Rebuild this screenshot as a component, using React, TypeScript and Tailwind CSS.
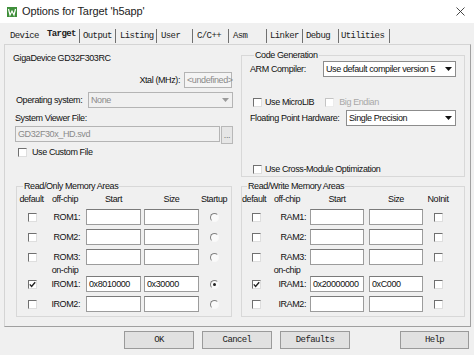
const sans = "font-['Liberation_Sans',Arial,sans-serif] text-[9px] tracking-[-0.4px] leading-[11px]"
const mono = "font-['Liberation_Mono','Courier_New',monospace] text-[9px] tracking-[-0.6px]"

function Check({ checked = false, disabled = false }: { checked?: boolean; disabled?: boolean }) {
  return (
    <span
      className={`flex h-[9px] w-[9px] shrink-0 items-center justify-center border bg-white ${
        disabled
          ? 'border-t-[#c4c4c4] border-l-[#c4c4c4] border-r-[#ececec] border-b-[#ececec]'
          : 'border-t-[#707070] border-l-[#707070] border-r-[#dedede] border-b-[#dedede]'
      }`}
    >
      {checked && (
        <svg width="7" height="7" viewBox="0 0 7 7">
          <path d="M0.8 3.4 L2.6 5.4 L6.2 1.2" fill="none" stroke="#222" strokeWidth="1.4" />
        </svg>
      )}
    </span>
  )
}

function Radio({ checked = false }: { checked?: boolean }) {
  return (
    <span className="flex h-[9px] w-[9px] items-center justify-center rounded-full border border-t-[#808080] border-l-[#808080] border-r-[#f8f8f8] border-b-[#f8f8f8] bg-[#fafafa]">
      {checked && <span className="h-[3px] w-[3px] rounded-full bg-[#222]" />}
    </span>
  )
}

function Arrow({ dim = false }: { dim?: boolean }) {
  return (
    <svg width="7" height="4" viewBox="0 0 7 4">
      <path d="M0 0H7L3.5 4Z" fill={dim ? '#9a9a9a' : '#111'} />
    </svg>
  )
}

function Input({ value = '', className = '' }: { value?: string; className?: string }) {
  return (
    <div
      className={`flex h-[16px] shrink-0 items-center border border-[#9c9c9c] border-t-[#7a7a7a] bg-white pl-[2px] text-[#111] ${className}`}
    >
      {value}
    </div>
  )
}

type MemRow = { name: string; checked?: boolean; start?: string; size?: string; onChip?: boolean }

const romRows: MemRow[] = [
  { name: 'ROM1:' },
  { name: 'ROM2:' },
  { name: 'ROM3:' },
  { name: 'IROM1:', checked: true, start: '0x8010000', size: '0x30000', onChip: true },
  { name: 'IROM2:' },
]

const ramRows: MemRow[] = [
  { name: 'RAM1:' },
  { name: 'RAM2:' },
  { name: 'RAM3:' },
  { name: 'IRAM1:', checked: true, start: '0x20000000', size: '0xC000', onChip: true },
  { name: 'IRAM2:' },
]

const tabs = [
  { label: 'Device', cls: 'w-[37px] pl-0', sep: false },
  { label: 'Target', cls: 'w-[32px] pl-0 -translate-y-[2px] font-bold', sep: true },
  { label: 'Output', cls: 'w-[35px] pl-[3px]', sep: true },
  { label: 'Listing', cls: 'w-[40px] pl-[4px]', sep: true },
  { label: 'User', cls: 'w-[35px] pl-[4px]', sep: true },
  { label: 'C/C++', cls: 'w-[35px] pl-[4px]', sep: true },
  { label: 'Asm', cls: 'w-[37px] pl-[4px]', sep: true },
  { label: 'Linker', cls: 'w-[35px] pl-[3px]', sep: true },
  { label: 'Debug', cls: 'w-[35px] pl-[3px]', sep: true },
  { label: 'Utilities', cls: 'w-[50px] pl-[2px]', sep: true },
]

export default function App() {
  return (
    <div className={`flex h-[355px] w-[474px] flex-col overflow-hidden bg-[#f0f0f0] text-[#111] ${sans}`}>
      {/* title bar */}
      <div className="flex h-[23px] shrink-0 items-center bg-white pl-[7px] pr-[9px]">
        <svg width="10" height="10" viewBox="0 0 10 10">
          <rect x="0" y="0" width="10" height="10" fill="#3f8f3a" />
          <path d="M1.5 2 L3 8 L5 4 L7 8 L8.5 2" fill="none" stroke="#fff" strokeWidth="1.2" />
        </svg>
        <span className="ml-[5px] font-['Liberation_Sans',Arial,sans-serif] text-[11px] tracking-[-0.1px] text-[#222]">
          Options for Target 'h5app'
        </span>
        <svg className="ml-auto" width="9" height="9" viewBox="0 0 9 9">
          <path d="M0.5 0.5 L8.5 8.5 M8.5 0.5 L0.5 8.5" stroke="#333" strokeWidth="0.9" />
        </svg>
      </div>

      {/* tabs */}
      <div className={`flex h-[21px] shrink-0 items-center pl-[10px] pt-[5px] ${mono}`}>
        {tabs.map((t) => (
          <div key={t.label} className="flex items-center">
            <span className={`${t.cls} text-[#222]`}>{t.label}</span>
            {t.sep && <span className="h-[14px] w-px bg-[#707070]" />}
          </div>
        ))}
      </div>

      {/* panel */}
      <div className="ml-[4px] flex h-[283px] w-[467px] shrink-0 flex-col border border-[#d4d4d4] border-r-[#a0a0a0] border-b-[#a0a0a0]">
        <div className="flex h-[132px] pl-[8px]">
          {/* left column */}
          <div className="flex w-[221px] flex-col">
            <div className="mt-[7px] h-[12px] leading-[12px]">GigaDevice GD32F303RC</div>
            <div className="mt-[8px] flex items-center justify-end pr-[2px]">
              <span>Xtal (MHz):</span>
              <div className="ml-[4px] flex h-[16px] w-[48px] items-center border border-[#b4b4b4] bg-[#f4f4f4] pl-[2px] text-[#8a8a8a]">
                &lt;undefined&gt;
              </div>
            </div>
            <div className="mt-[4px] flex items-center pl-[3px]">
              <span className="w-[72px]">Operating system:</span>
              <div className="flex h-[16px] w-[145px] items-center justify-between border border-[#b4b4b4] bg-[#f0f0f0] pl-[2px] pr-[3px] text-[#8a8a8a]">
                <span>None</span>
                <Arrow dim />
              </div>
            </div>
            <div className="mt-[4px] h-[12px] pl-[2px] leading-[12px]">System Viewer File:</div>
            <div className="mt-[2px] flex items-start pl-[2px]">
              <div className="flex h-[16px] w-[205px] items-center border border-[#b4b4b4] bg-[#f0f0f0] pl-[2px] text-[#8a8a8a]">
                GD32F30x_HD.svd
              </div>
              <div className="ml-px flex h-[18px] w-[12px] items-center justify-center border border-[#b8b8b8] bg-[#e6e6e6] text-[#777]">
                ...
              </div>
            </div>
            <div className="mt-[3px] flex h-[10px] items-center pl-[5px]">
              <Check />
              <span className="ml-[5px]">Use Custom File</span>
            </div>
          </div>

          {/* code generation */}
          <fieldset className="ml-[7px] mt-[5px] h-[127px] w-[224px] border border-[#d8d8d8] pl-[8px]">
            <legend className="ml-[4px] px-px">Code Generation</legend>
            <div className="flex items-center">
              <span className="w-[73px]">ARM Compiler:</span>
              <div className="flex h-[16px] w-[133px] items-center justify-between border border-[#8c8c8c] bg-white pl-[2px] pr-[3px]">
                <span>Use default compiler version 5</span>
                <Arrow />
              </div>
            </div>
            <div className="mt-[19px] flex h-[12px] items-center pl-[3px]">
              <Check />
              <span className="ml-[3px]">Use MicroLIB</span>
              <span className="ml-[11px]">
                <Check disabled />
              </span>
              <span className="ml-[5px] text-[#a8a8a8]">Big Endian</span>
            </div>
            <div className="mt-[2px] flex items-center">
              <span className="w-[96px]">Floating Point Hardware:</span>
              <div className="flex h-[16px] w-[110px] items-center justify-between border border-[#8c8c8c] bg-white pl-[2px] pr-[3px]">
                <span>Single Precision</span>
                <Arrow />
              </div>
            </div>
            <div className="mt-[37px] flex h-[12px] items-center pl-[3px]">
              <Check />
              <span className="ml-[3px]">Use Cross-Module Optimization</span>
            </div>
          </fieldset>
        </div>

        {/* memory areas */}
        <div className="mt-[4px] flex pl-[11px]">
          <fieldset className="h-[136px] w-[216px] border border-[#d8d8d8]">
            <legend className="ml-[6px] px-px">Read/Only Memory Areas</legend>
            <div className="mt-[2px] flex h-[11px] items-center">
              <span className="w-[29px] text-center">default</span>
              <span className="w-[38px] text-center">off-chip</span>
              <span className="ml-[2px] w-[55px] text-center">Start</span>
              <span className="ml-[3px] w-[55px] text-center">Size</span>
              <span className="w-[30px] text-center">Startup</span>
            </div>
            {romRows.map((r) => (
              <div key={r.name}>
                {r.onChip && <div className="ml-[29px] h-[11px] w-[38px] text-center">on-chip</div>}
                <div className={`${r.onChip ? 'mt-0' : r.name === 'IROM2:' ? 'mt-[4px]' : 'mt-[4px]'} flex h-[16px] items-center`}>
                  <span className="flex w-[29px] justify-center pl-[2px]">
                    <Check checked={r.checked} />
                  </span>
                  <span className="w-[38px] pr-[4px] text-right">{r.name}</span>
                  <Input className="ml-[2px] w-[55px]" value={r.start} />
                  <Input className="ml-[3px] w-[55px]" value={r.size} />
                  <span className="flex w-[28px] justify-center pl-[2px]">
                    <Radio checked={r.checked} />
                  </span>
                </div>
              </div>
            ))}
          </fieldset>

          <fieldset className="ml-[9px] h-[136px] w-[224px] border border-[#d8d8d8]">
            <legend className="ml-[5px] px-px">Read/Write Memory Areas</legend>
            <div className="mt-[2px] flex h-[11px] items-center">
              <span className="w-[24px] text-center">default</span>
              <span className="w-[42px] text-center">off-chip</span>
              <span className="ml-[2px] w-[54px] text-center">Start</span>
              <span className="ml-[5px] w-[54px] text-center">Size</span>
              <span className="w-[30px] text-center">NoInit</span>
            </div>
            {ramRows.map((r) => (
              <div key={r.name}>
                {r.onChip && <div className="ml-[24px] h-[11px] w-[42px] text-center">on-chip</div>}
                <div className={`${r.onChip ? 'mt-0' : 'mt-[4px]'} flex h-[16px] items-center`}>
                  <span className="flex w-[24px] justify-center pl-[4px]">
                    <Check checked={r.checked} />
                  </span>
                  <span className="w-[42px] pr-[2px] text-right">{r.name}</span>
                  <Input className="ml-[2px] w-[54px]" value={r.start} />
                  <Input className="ml-[5px] w-[54px]" value={r.size} />
                  <span className="flex w-[30px] justify-center">
                    <Check />
                  </span>
                </div>
              </div>
            ))}
          </fieldset>
        </div>
      </div>

      {/* buttons */}
      <div className={`mt-[4px] flex pl-[124px] ${mono}`}>
        {['OK', 'Cancel', 'Defaults'].map((b) => (
          <button
            key={b}
            type="button"
            className="mr-[8px] flex h-[18px] w-[70px] items-center justify-center border border-[#9a9a9a] bg-[#e1e1e1] text-[#222]"
          >
            {b}
          </button>
        ))}
        <button
          type="button"
          className="ml-[42px] flex h-[18px] w-[69px] items-center justify-center border border-[#9a9a9a] bg-[#e1e1e1] text-[#222]"
        >
          Help
        </button>
      </div>
    </div>
  )
}
